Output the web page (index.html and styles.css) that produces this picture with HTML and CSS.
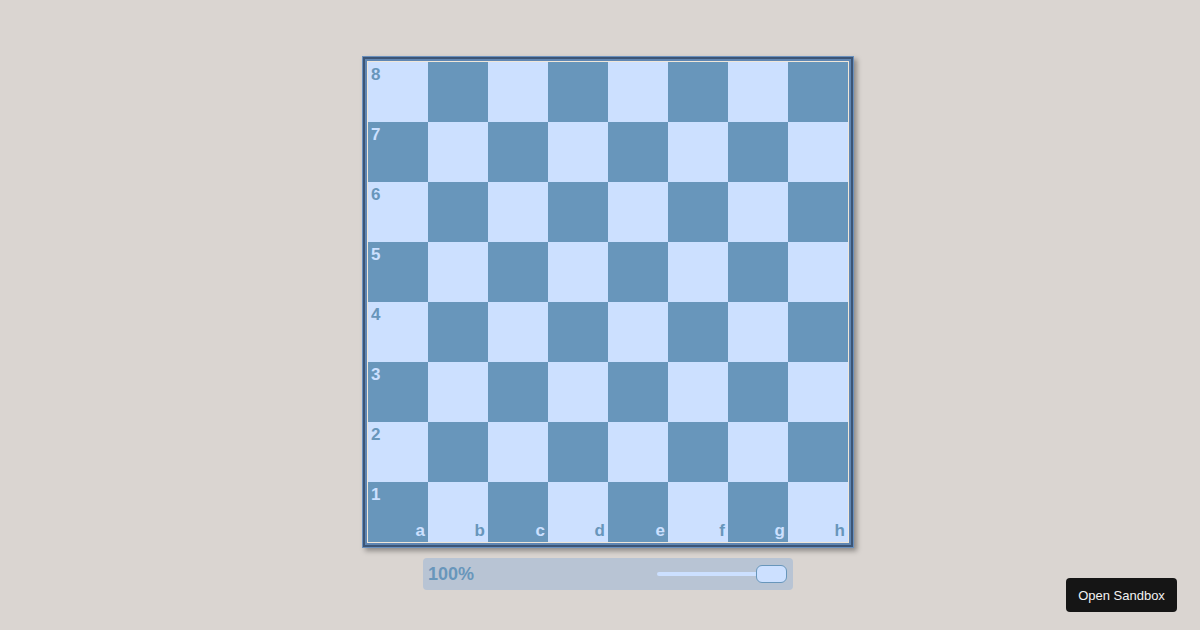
FILE: index.html
```html
<!DOCTYPE html>
<html lang="en">
<head>
  <meta charset="UTF-8">
  <meta name="viewport" content="width=device-width, initial-scale=1.0">
  <title>Chessboard</title>
  <link rel="stylesheet" href="styles.css">
</head>
<body>
  <div class="app">
    <div class="frame">
      <div class="board" id="board"></div>
    </div>

    <div class="zoom-bar">
      <span class="zoom-value">100%</span>
      <div class="slider">
        <div class="track"></div>
        <div class="thumb"></div>
      </div>
    </div>
  </div>

  <button class="sandbox">Open Sandbox</button>

  <script>
    const board = document.getElementById('board');
    const files = ['a', 'b', 'c', 'd', 'e', 'f', 'g', 'h'];

    for (let rank = 8; rank >= 1; rank--) {
      files.forEach((file, col) => {
        const sq = document.createElement('div');
        const dark = (rank + col) % 2 === 1;
        sq.className = 'square ' + (dark ? 'dark' : 'light');
        if (col === 0) {
          const r = document.createElement('span');
          r.className = 'rank';
          r.textContent = rank;
          sq.appendChild(r);
        }
        if (rank === 1) {
          const f = document.createElement('span');
          f.className = 'file';
          f.textContent = file;
          sq.appendChild(f);
        }
        board.appendChild(sq);
      });
    }
  </script>
</body>
</html>
```

FILE: styles.css
```css
body {
  margin: 0;
  background-color: #dad5d1;
  font-family: 'Liberation Sans', Arial, sans-serif;
  height: 630px;
  overflow: hidden;
}
.app {
  display: flex;
  flex-direction: column;
  align-items: center;
  padding-top: 56px;
  padding-left: 16px;
}
.frame {
  border: 1px solid #6a90bd;
  box-shadow: 3px 3px 5px rgba(0,0,0,0.35);
}
.board {
  display: grid;
  grid-template-columns: repeat(8, 60px);
  grid-template-rows: repeat(8, 60px);
  border: 2px solid #3c5576;
  padding: 3px;
  background: #5f86b3;
  position: relative;
}
/* thin cream line just inside the blue rim */
.board::after {
  content: '';
  position: absolute;
  inset: 2px;
  border: 1px solid #efe6d8;
  pointer-events: none;
}
.square {
  position: relative;
  font-weight: bold;
  font-size: 17px;
}
.square.light {
  background-color: #cce0ff;
  color: #6896bb;
}
.square.dark {
  background-color: #6896bb;
  color: #cce0ff;
}
.rank {
  position: absolute;
  top: 3px;
  left: 3px;
}
.file {
  position: absolute;
  right: 3px;
  bottom: 1px;
}
.zoom-bar {
  margin-top: 10px;
  width: 370px;
  height: 32px;
  box-sizing: border-box;
  background-color: #b8c4d4;
  border-radius: 4px;
  display: flex;
  align-items: center;
  justify-content: space-between;
  padding: 0 6px 0 5px;
}
.zoom-value {
  font-weight: bold;
  font-size: 18px;
  color: #6896bb;
}
.slider {
  position: relative;
  width: 130px;
  height: 20px;
  display: flex;
  align-items: center;
}
.track {
  width: 100%;
  height: 4px;
  border-radius: 2px;
  background-color: #cce0ff;
}
.thumb {
  position: absolute;
  right: 0;
  top: 1px;
  width: 29px;
  height: 16px;
  background-color: #cce0ff;
  border: 1px solid #6896bb;
  border-radius: 6px;
}
.sandbox {
  position: fixed;
  right: 23px;
  bottom: 18px;
  width: 111px;
  height: 34px;
  border: none;
  border-radius: 4px;
  background-color: #151515;
  color: #f2f2f2;
  font-family: 'Liberation Sans', Arial, sans-serif;
  font-size: 13px;
  cursor: pointer;
}
```
